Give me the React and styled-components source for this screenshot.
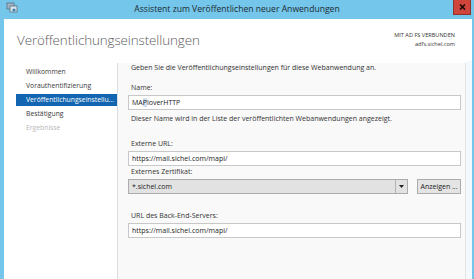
import styled, { createGlobalStyle } from "styled-components";

const GlobalStyle = createGlobalStyle`
  html, body {
    margin: 0;
    padding: 0;
    background: #74c6ea;
    overflow: hidden;
  }
  * {
    box-sizing: border-box;
  }
`;

const navItems = [
  { label: "Willkommen" },
  { label: "Vorauthentifizierung" },
  { label: "Veröffentlichungseinstellu...", active: true },
  { label: "Bestätigung" },
  { label: "Ergebnisse", disabled: true },
];

const App = () => {
  return (
    <>
      <GlobalStyle />
      <Window>
        <TitleBar>
          <AppIcon>
            <svg width="12" height="12" viewBox="0 0 12 12">
              <rect x="1" y="1" width="7" height="6" fill="#9fb4c4" stroke="#5a7184" strokeWidth="0.8" />
              <rect x="4" y="4" width="7" height="6" fill="#d9e4ea" stroke="#5a7184" strokeWidth="0.8" />
              <circle cx="8" cy="8" r="1.6" fill="#3f7fb0" />
            </svg>
          </AppIcon>
          <TitleText>Assistent zum Veröffentlichen neuer Anwendungen</TitleText>
          <CloseButton>
            <svg width="7" height="6" viewBox="0 0 7 6">
              <path d="M1 0.5 L6 5.5 M6 0.5 L1 5.5" stroke="#1a0a0a" strokeWidth="1.6" />
            </svg>
          </CloseButton>
        </TitleBar>
        <Client>
          <Header>
            <PageTitle>Veröffentlichungseinstellungen</PageTitle>
            <Connection>
              <span>MIT AD FS VERBUNDEN</span>
              <span>adfs.sichel.com</span>
            </Connection>
          </Header>
          <Body>
            <Sidebar>
              {navItems.map((item) => (
                <NavItem key={item.label} $active={item.active} $disabled={item.disabled}>
                  {item.label}
                </NavItem>
              ))}
            </Sidebar>
            <Content>
              <Intro>Geben Sie die Veröffentlichungseinstellungen für diese Webanwendung an.</Intro>
              <Field $top={10}>
                <Label>Name:</Label>
                <TextBox>
                  MA<Caret>P</Caret>loverHTTP
                </TextBox>
                <Hint>Dieser Name wird in der Liste der veröffentlichten Webanwendungen angezeigt.</Hint>
              </Field>
              <Field $top={15}>
                <Label>Externe URL:</Label>
                <TextBox>https://mail.sichel.com/mapi/</TextBox>
              </Field>
              <Field $top={1}>
                <Label>Externes Zertifikat:</Label>
                <SelectRow>
                  <Select>
                    <SelectValue>*.sichel.com</SelectValue>
                    <SelectArrow>
                      <svg width="5" height="3" viewBox="0 0 5 3">
                        <path d="M0 0 L5 0 L2.5 3 Z" fill="#222" />
                      </svg>
                    </SelectArrow>
                  </Select>
                  <Button>Anzeigen ...</Button>
                </SelectRow>
              </Field>
              <Field $top={17}>
                <Label>URL des Back-End-Servers:</Label>
                <TextBox>https://mail.sichel.com/mapi/</TextBox>
              </Field>
            </Content>
            <RightGutter />
          </Body>
        </Client>
      </Window>
    </>
  );
};

const Window = styled.div`
  width: 474px;
  height: 279px;
  display: flex;
  flex-direction: column;
  background: #74c6ea;
  overflow: hidden;
  font-family: "Open Sans", "Noto Sans", sans-serif;
`;

const TitleBar = styled.div`
  position: relative;
  height: 19px;
  flex: none;
  display: flex;
  align-items: center;
  padding: 0 60px;
`;

const AppIcon = styled.div`
  position: absolute;
  left: 6px;
  top: 2px;
  display: flex;
`;

const TitleText = styled.div`
  flex: 1;
  min-width: 0;
  line-height: 18px;
  padding-bottom: 1px;
  text-align: center;
  font-size: 8.6px;
  color: #1e2a33;
  white-space: nowrap;
`;

const CloseButton = styled.div`
  position: absolute;
  top: 0;
  right: 3px;
  z-index: 2;
  width: 18px;
  height: 15px;
  display: flex;
  align-items: center;
  justify-content: center;
  background: #d0453b;
  border: 1px solid #8e332c;
  border-top: 0;
`;

const Client = styled.div`
  flex: 1;
  margin: 0 2px 0 4px;
  background: #ffffff;
  display: flex;
  flex-direction: column;
  min-height: 0;
`;

const Header = styled.div`
  height: 42px;
  flex: none;
  display: flex;
  justify-content: space-between;
  align-items: flex-start;
  padding: 0 17px 0 13px;
`;

const PageTitle = styled.h1`
  margin: 12px 0 0;
  font-family: "Open Sans", sans-serif;
  font-weight: 300;
  font-size: 13.4px;
  letter-spacing: -0.1px;
  color: #5c5c5c;
`;

const Connection = styled.div`
  margin-top: 12px;
  display: flex;
  flex-direction: column;
  align-items: flex-end;
  font-size: 5.6px;
  line-height: 9px;
  color: #333;
`;

const Body = styled.div`
  flex: 1;
  display: flex;
  min-height: 0;
`;

const Sidebar = styled.div`
  width: 113px;
  flex: none;
  padding: 5px 0 0 12px;
  display: flex;
  flex-direction: column;
  gap: 2px;
  background: #ffffff;
`;

const NavItem = styled.div`
  height: 12px;
  line-height: 12px;
  padding-left: 10px;
  font-size: 6.8px;
  white-space: nowrap;
  overflow: hidden;
  color: ${(p) => (p.$active ? "#ffffff" : p.$disabled ? "#b8b8b8" : "#3a3a3a")};
  background: ${(p) => (p.$active ? "#1265b0" : "transparent")};
`;

const Content = styled.div`
  flex: 1;
  margin-top: 2px;
  background: #f9f9f9;
  border-left: 1px solid #dcdcdc;
  border-right: 1px solid #e4e4e4;
  padding: 0 0 0 10px;
  display: flex;
  flex-direction: column;
`;

const RightGutter = styled.div`
  width: 6px;
  flex: none;
  background: #f3f9fc;
`;

const Intro = styled.div`
  font-size: 7px;
  color: #333;
  padding-left: 3px;
  line-height: 10px;
`;

const Field = styled.div`
  margin-top: ${(p) => p.$top}px;
  display: flex;
  flex-direction: column;
`;

const Label = styled.div`
  font-size: 7px;
  line-height: 10px;
  color: #333;
  padding-left: 3px;
  margin-bottom: 2px;
`;

const TextBox = styled.div`
  height: 15px;
  width: 333px;
  border: 1px solid #c8c8c8;
  background: #ffffff;
  font-size: 7px;
  line-height: 13px;
  padding-left: 3px;
  color: #222;
  white-space: nowrap;
`;

const Caret = styled.span`
  background: #cfe0f2;
`;

const Hint = styled.div`
  font-size: 7px;
  line-height: 10px;
  color: #333;
  padding-left: 3px;
  margin-top: 4px;
`;

const SelectRow = styled.div`
  display: flex;
  align-items: center;
  gap: 9px;
`;

const Select = styled.div`
  width: 280px;
  height: 15px;
  display: flex;
  border: 1px solid #acacac;
  background: #e2e2e2;
`;

const SelectValue = styled.div`
  flex: 1;
  font-size: 7px;
  line-height: 13px;
  padding-left: 3px;
  color: #222;
`;

const SelectArrow = styled.div`
  width: 12px;
  border-left: 1px solid #b4b4b4;
  display: flex;
  align-items: center;
  justify-content: center;
`;

const Button = styled.div`
  width: 44px;
  height: 15px;
  border: 1px solid #acacac;
  background: #e4e4e4;
  font-size: 7px;
  line-height: 13px;
  text-align: center;
  color: #222;
  white-space: nowrap;
`;

export default App;
